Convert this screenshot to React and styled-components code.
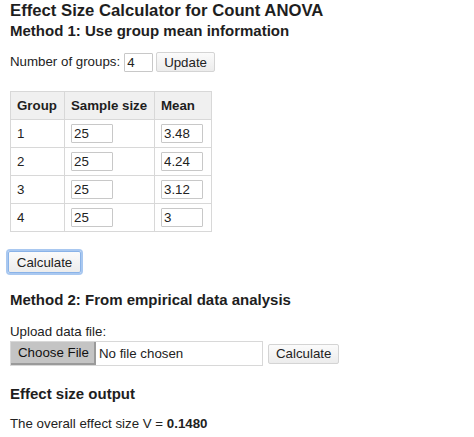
import React from 'react';
import styled, { createGlobalStyle } from 'styled-components';

const Global = createGlobalStyle`
  body {
    margin: 0;
    background: #fff;
    font-family: "Liberation Sans", Arial, sans-serif;
    color: #222;
  }
`;

const Page = styled.div`
  padding: 0 10px;
  display: flex;
  flex-direction: column;
  align-items: flex-start;
`;

const Title = styled.h1`
  margin: 0;
  font-size: 16.7px;
  line-height: 21px;
  font-weight: bold;
  color: #1e1e1e;
`;

const Heading = styled.h2`
  margin: ${({ $top }) => $top || '0'} 0 0 0;
  font-size: 15px;
  line-height: 19px;
  font-weight: bold;
  color: #1e1e1e;
`;

const Row = styled.div`
  display: flex;
  align-items: center;
  margin-top: ${({ $top }) => $top || '0'};
  font-size: 13.3px;
  line-height: 18px;
`;

const Label = styled.span`
  margin-right: 4px;
`;

const TextBox = styled.input`
  box-sizing: border-box;
  width: ${({ $w }) => $w || '42px'};
  height: 19px;
  padding: 0 2px;
  border: 1px solid #c8c8c8;
  border-radius: 1px;
  font: 13.3px "Liberation Sans", Arial, sans-serif;
  color: #222;
  background: #fff;
  outline: none;
`;

const Button = styled.button`
  box-sizing: border-box;
  height: ${({ $h }) => $h || '20px'};
  padding: 0 7px;
  margin-left: ${({ $ml }) => $ml || '0'};
  border: 1px solid #d4d4d4;
  border-radius: 2px;
  background: linear-gradient(#fbfbfb, #ececec);
  font: 13.3px "Liberation Sans", Arial, sans-serif;
  color: #222;
  cursor: pointer;
`;

const FocusButton = styled(Button)`
  margin-top: 19px;
  margin-left: -2px;
  height: 22px;
  width: 73px;
  border: 1px solid #8ab3e8;
  box-shadow: 0 0 0 2px #a9c8f0;
  padding: 0 6px;
`;

const Table = styled.table`
  margin-top: 19px;
  border-collapse: collapse;
  font-size: 13.3px;
  & th, & td {
    border: 1px solid #d8d8d8;
    text-align: left;
    padding: 0 6px;
    height: 27px;
  }
  & th {
    background: #f0f0f0;
    font-weight: bold;
    color: #1e1e1e;
  }
  & td {
    vertical-align: middle;
  }
`;

const Col = styled.col`
  width: ${({ $w }) => $w};
`;

const FileBox = styled.div`
  display: flex;
  align-items: center;
  box-sizing: border-box;
  width: 253px;
  height: 25px;
  border: 1px solid #d8d8d8;
  background: #fff;
`;

const ChooseButton = styled.span`
  display: flex;
  align-items: center;
  height: 100%;
  box-sizing: border-box;
  padding: 0 5px 0 7px;
  background: #c4c4c4;
  border-right: 2px solid #9a9a9a;
  border-bottom: 2px solid #9a9a9a;
  font-size: 13.3px;
  color: #111;
`;

const FileName = styled.span`
  padding-left: 3px;
  font-size: 13.3px;
`;

const Output = styled.p`
  margin: 12px 0 0 0;
  font-size: 13.3px;
  line-height: 18px;
`;

const groups = [
  { id: 1, n: 25, mean: '3.48' },
  { id: 2, n: 25, mean: '4.24' },
  { id: 3, n: 25, mean: '3.12' },
  { id: 4, n: 25, mean: '3' },
];

export default function App() {
  return (
    <Page>
      <Global />
      <Title>Effect Size Calculator for Count ANOVA</Title>
      <Heading>Method 1: Use group mean information</Heading>
      <Row $top="12px">
        <Label>Number of groups:</Label>
        <TextBox $w="29px" defaultValue="4" />
        <Button $ml="3px">Update</Button>
      </Row>
      <Table>
        <colgroup>
          <Col $w="54px" />
          <Col $w="90px" />
          <Col $w="57px" />
        </colgroup>
        <thead>
          <tr>
            <th>Group</th>
            <th>Sample size</th>
            <th>Mean</th>
          </tr>
        </thead>
        <tbody>
          {groups.map((g) => (
            <tr key={g.id}>
              <td>{g.id}</td>
              <td><TextBox defaultValue={g.n} /></td>
              <td><TextBox defaultValue={g.mean} /></td>
            </tr>
          ))}
        </tbody>
      </Table>
      <FocusButton>Calculate</FocusButton>
      <Heading $top="17px">Method 2: From empirical data analysis</Heading>
      <Row $top="14px">Upload data file:</Row>
      <Row $top="0px">
        <FileBox>
          <ChooseButton>Choose File</ChooseButton>
          <FileName>No file chosen</FileName>
        </FileBox>
        <Button $ml="5px">Calculate</Button>
      </Row>
      <Heading $top="18px">Effect size output</Heading>
      <Output>The overall effect size V = <b>0.1480</b></Output>
    </Page>
  );
}
